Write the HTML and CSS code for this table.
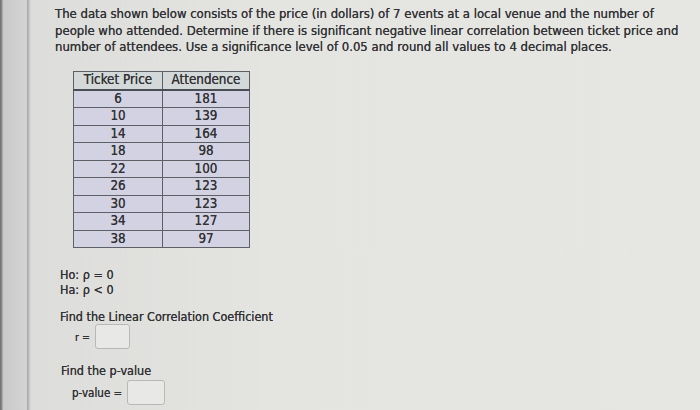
FILE: index.html
```html
<!DOCTYPE html>
<html>
<head>
<meta charset="utf-8">
<link rel="stylesheet" href="styles.css">
</head>
<body>
<div class="screen">
  <div class="edge"></div>
  <div class="divider"></div>
  <div class="main">
    <p class="intro">The data shown below consists of the price (in dollars) of 7 events at a local venue and the number of people who attended. Determine if there is significant negative linear correlation between ticket price and number of attendees. Use a significance level of 0.05 and round all values to 4 decimal places.</p>
    <table class="data">
      <thead>
        <tr><th>Ticket Price</th><th>Attendence</th></tr>
      </thead>
      <tbody>
        <tr><td>6</td><td>181</td></tr>
        <tr><td>10</td><td>139</td></tr>
        <tr><td>14</td><td>164</td></tr>
        <tr><td>18</td><td>98</td></tr>
        <tr><td>22</td><td>100</td></tr>
        <tr><td>26</td><td>123</td></tr>
        <tr><td>30</td><td>123</td></tr>
        <tr><td>34</td><td>127</td></tr>
        <tr><td>38</td><td>97</td></tr>
      </tbody>
    </table>
    <div class="hyp">
      <div>Ho: ρ = 0</div>
      <div>Ha: ρ &lt; 0</div>
    </div>
    <div class="q1">Find the Linear Correlation Coefficient</div>
    <div class="ans r-ans"><span class="lbl small">r =</span><span class="box"></span></div>
    <div class="q2">Find the p-value</div>
    <div class="ans p-ans"><span class="lbl">p-value =</span><span class="box"></span></div>
  </div>
</div>
</body>
</html>
```

FILE: styles.css
```css
html, body {
  margin: 0;
  padding: 0;
}
body {
  width: 700px;
  height: 410px;
  overflow: hidden;
  background: #e3e3e0;
  font-family: "DejaVu Sans Condensed", "DejaVu Sans", sans-serif;
  color: #333336;
}
.screen {
  display: flex;
  height: 410px;
  background: linear-gradient(90deg, #dcdcda 0%, #e4e4e1 40%, #e6e6e3 100%);
}
.edge {
  width: 27px;
  flex: none;
  background: linear-gradient(90deg, #6e6e70 0px, #8d8d90 2px, #c9c9ca 3px, #d3d3d4 25px);
}
.divider {
  width: 4px;
  flex: none;
  background: linear-gradient(90deg, #9fa0a2 0%, #c4c4c5 50%, #dadad9 100%);
}
.main {
  flex: 1;
  padding: 6px 0 0 24px;
  font-size: 12.5px;
  text-shadow: 0 0 0.4px #333336;
}
.intro {
  margin: 0;
  width: 628px;
  font-size: 13px;
  line-height: 16.5px;
}
.data {
  margin: 15px 0 0 18px;
  border-collapse: collapse;
  font-size: 13.3px;
  border: 1px solid #4c4f55;
}
.data th, .data td {
  border: 1px solid #5d6066;
  text-align: center;
  padding: 0;
  height: 16.5px;
  line-height: 16px;
}
.data th {
  background: #d3d8d8;
  font-weight: normal;
  height: 17px;
  padding: 0 4px;
  border-bottom: 2px solid #4a4d53;
}
.data th:first-child { width: 80px; }
.data th:last-child { width: 78px; }
.data td {
  background: #d2d2e2;
}
.hyp {
  margin: 20px 0 0 5px;
  line-height: 14.5px;
}
.q1 {
  margin: 12px 0 0 5px;
  line-height: 16px;
}
.ans {
  display: flex;
  align-items: center;
  gap: 5px;
}
.r-ans {
  margin: -1px 0 0 20px;
}
.lbl {
  font-size: 11.5px;
}
.lbl.small {
  font-size: 10.5px;
}
.box {
  display: inline-block;
  width: 33px;
  height: 23px;
  border: 1px solid #b8b8b8;
  border-radius: 3px;
  background: #e8e8e6;
}
.q2 {
  margin: 14px 0 0 6px;
  line-height: 16px;
}
.p-ans {
  margin: 1px 0 0 17px;
}
.p-ans .box {
  width: 36px;
}
```
